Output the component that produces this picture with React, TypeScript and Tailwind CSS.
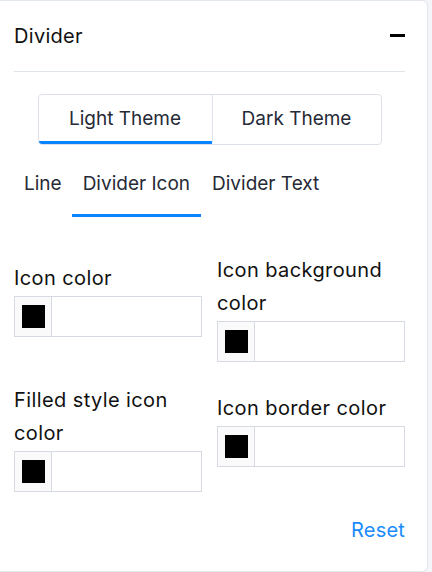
import React from "react";

function ColorInput() {
  return (
    <div className="mt-[1px] flex h-[41px] w-full border border-[#d6dbe3] bg-white">
      <div className="flex w-[37px] items-center justify-center border-r border-[#d6dbe3] bg-[#fafafa]">
        <div className="h-[23px] w-[23px] bg-black" />
      </div>
      <div className="flex-1" />
    </div>
  );
}

function Field({ label, className = "" }: { label: React.ReactNode; className?: string }) {
  return (
    <div className={className}>
      <div className="whitespace-nowrap pt-[2px] text-[20px] leading-[33px] tracking-[0.02em] text-[#111111]">{label}</div>
      <ColorInput />
    </div>
  );
}

export default function App() {
  return (
    <div
      className="h-[572px] w-[432px] bg-[#f3f5f8] pt-0"
      style={{ fontFamily: "Inter, 'Noto Sans', sans-serif" }}
    >
      <div className="h-[572px] w-[428px] rounded-r-[6px] border border-l-0 border-[#e2e6ed] bg-white pl-[14px] pr-[22px]">
        <div className="flex h-[70px] items-center justify-between">
          <span className="text-[20px] tracking-[0.015em] text-[#111111]">Divider</span>
          <span className="mt-[-1px] h-[3px] w-[15px] bg-black" />
        </div>
        <div className="h-px bg-[#dfe3ea]" />

        <div className="mt-[22px] flex justify-center">
          <div className="flex h-[51px] overflow-hidden rounded-[4px] border border-[#dde2ea]">
            <div className="flex w-[173px] items-center justify-center border-b-[3px] border-[#0b84ff] pt-[2px] text-[19px] text-[#262a36]">
              Light Theme
            </div>
            <div className="flex w-[169px] items-center justify-center border-b-[3px] border-l border-b-transparent border-l-[#dde2ea] pt-[2px] text-[19px] text-[#262a36]">
              Dark Theme
            </div>
          </div>
        </div>

        <div className="mt-[26px] flex text-[19px] leading-[24px] text-[#262a36]">
          <div className="border-b-[3px] border-transparent px-[10px] pb-[18px] pt-[1px]">Line</div>
          <div className="border-b-[3px] border-[#0b84ff] px-[11px] pb-[18px] pt-[1px]">Divider Icon</div>
          <div className="border-b-[3px] border-transparent px-[11px] pb-[18px] pt-[1px]">Divider Text</div>
        </div>

        <div className="mt-[35px] grid grid-cols-2 items-start gap-x-[15px] gap-y-[20px]">
          <Field label="Icon color" className="mt-[8px]" />
          <Field label={<>Icon background<br />color</>} />
          <Field label={<>Filled style icon<br />color</>} />
          <Field label="Icon border color" className="mt-[8px]" />
        </div>

        <div className="mt-[22px] flex justify-end">
          <span className="text-[20px] leading-[33px] tracking-[0.01em] text-[#1a8cff]">Reset</span>
        </div>
      </div>
    </div>
  );
}
